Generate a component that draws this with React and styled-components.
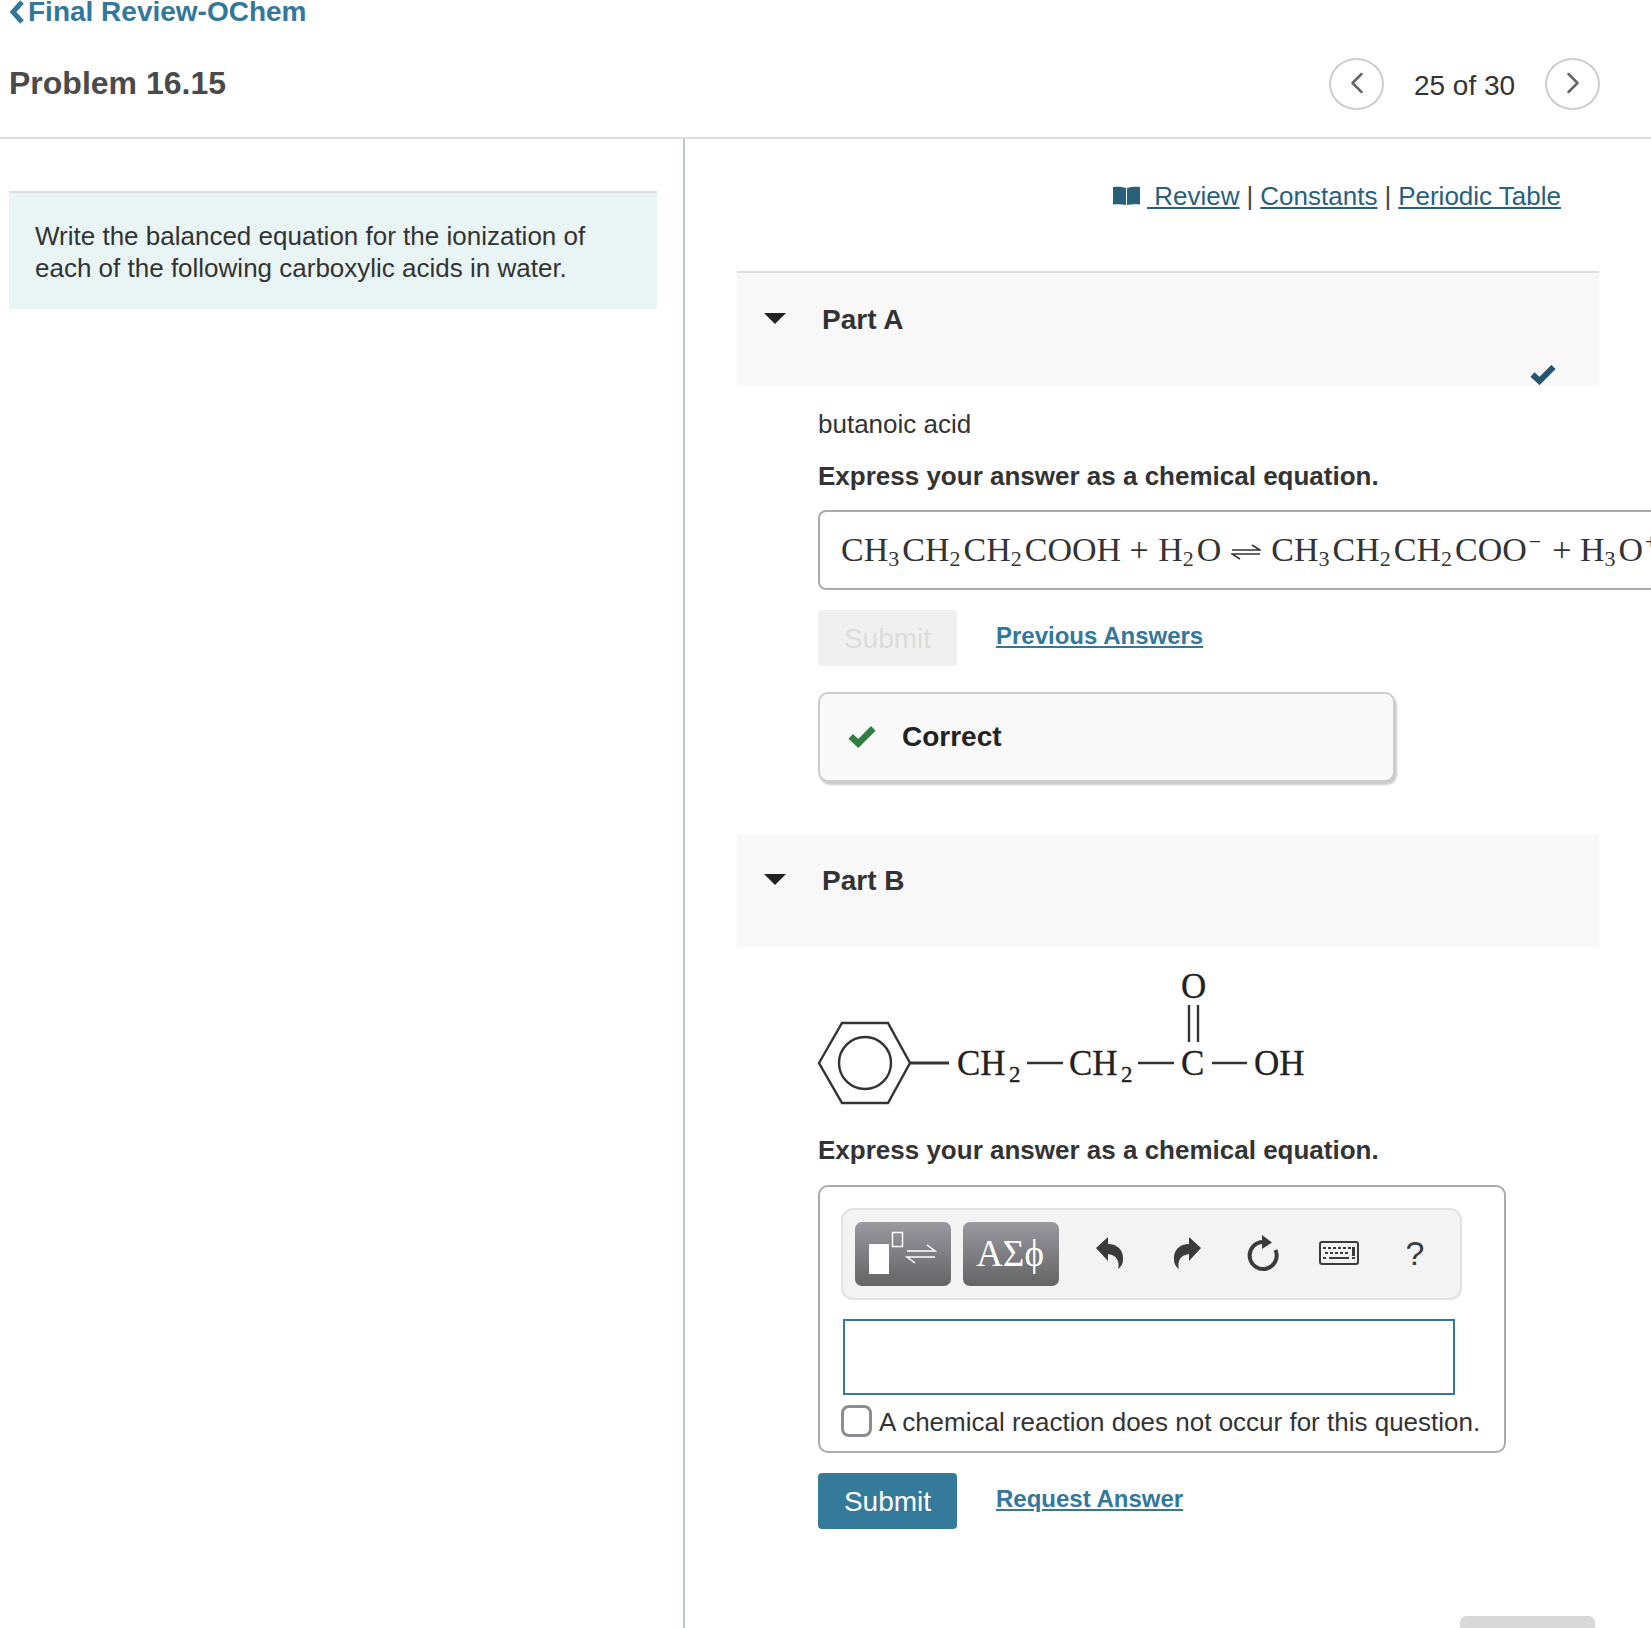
import React from 'react';
import styled, {createGlobalStyle} from 'styled-components';
import {ChevronLeft, ChevronRight} from 'lucide-react';

const GlobalStyle = createGlobalStyle`
    html, body {
        margin: 0;
        padding: 0;
        background: #fff;
    }
    body {
        font-family: 'Liberation Sans', Arial, sans-serif;
        color: #333;
    }
`;

const Page = styled.div`
    width: 1651px;
    height: 1628px;
    overflow: hidden;
`;

const TopBar = styled.header`
    height: 137px;
    padding-left: 9px;
    padding-right: 51px;
    border-bottom: 2px solid #ddd;
`;

const BackLink = styled.a`
    display: flex;
    align-items: center;
    gap: 4px;
    height: 24px;
    color: #33789a;
    font-size: 28px;
    font-weight: bold;
    line-height: 24px;
`;

const TitleRow = styled.div`
    display: flex;
    justify-content: space-between;
    align-items: center;
    margin-top: 34px;
`;

const Title = styled.h1`
    margin: 0;
    padding-bottom: 2px;
    font-size: 32px;
    font-weight: bold;
    color: #4a4a4a;
`;

const Pager = styled.div`
    display: flex;
    align-items: center;
    font-size: 28px;
    color: #333;
`;

const PagerText = styled.span`
    width: 161px;
    padding-top: 3px;
    text-align: center;
`;

const RoundButton = styled.button`
    display: flex;
    align-items: center;
    justify-content: center;
    width: 55px;
    height: 52px;
    padding: 0 0 2px;
    background: #fff;
    border: 2px solid #ccc;
    border-radius: 50%;
    color: #666;
`;

const Columns = styled.div`
    display: grid;
    grid-template-columns: 683px 1fr;
`;

const LeftColumn = styled.aside`
    padding: 52px 26px 0 9px;
    height: 1489px;
    box-sizing: border-box;
    border-right: 2px solid #b9c7d6;
    width: 685px;
`;

const IntroBox = styled.div`
    height: 116px;
    box-sizing: content-box;
    padding: 0 26px;
    background: #e9f5f5;
    border-top: 2px solid #ddd;
    font-size: 26px;
    line-height: 32px;
    color: #333;
`;

const IntroText = styled.p`
    margin: 0;
    padding-top: 27px;
`;

const RightColumn = styled.main`
    padding: 41px 52px 0 54px;
    min-width: 0;
`;

const LinksRow = styled.div`
    display: flex;
    justify-content: flex-end;
    align-items: center;
    gap: 7px;
    height: 32px;
    margin-right: 38px;
    font-size: 26px;
    color: #444;
`;

const RefLink = styled.a`
    color: #2a5f7a;
    text-decoration: underline;
    white-space: pre;
`;

const BookIcon = styled.svg`
    width: 27px;
    height: 20px;
`;

const PartHeader = styled.section`
    position: relative;
    display: flex;
    align-items: flex-start;
    box-sizing: border-box;
    height: ${p => p.$height}px;
    margin-top: ${p => p.$top}px;
    padding: ${p => p.$pad}px 0 0 27px;
    background: #f8f8f8;
    border-top: ${p => (p.$line ? '2px solid #ddd' : 'none')};
`;

const Triangle = styled.span`
    width: 0;
    height: 0;
    margin-top: 9px;
    border-left: 11px solid transparent;
    border-right: 11px solid transparent;
    border-top: 11px solid #222;
`;

const PartTitle = styled.h2`
    margin: 0 0 0 36px;
    font-size: 28px;
    line-height: 32px;
    font-weight: bold;
    color: #333;
`;

const DoneMark = styled.span`
    position: absolute;
    right: 43px;
    bottom: 1px;
    display: flex;
`;

const PartBody = styled.div`
    margin-left: 81px;
`;

const Prompt = styled.p`
    margin: ${p => p.$top}px 0 0;
    font-size: 26px;
    line-height: 32px;
    font-weight: ${p => (p.$bold ? 'bold' : 'normal')};
    color: #333;
`;

const AnswerBox = styled.div`
    display: flex;
    align-items: center;
    box-sizing: border-box;
    width: 900px;
    height: 80px;
    margin-top: 18px;
    padding-left: 21px;
    background: #fff;
    border: 2px solid #aaa;
    border-radius: 8px;
    font-family: 'Liberation Serif', 'Times New Roman', serif;
    font-size: 34px;
    color: #333;
    white-space: nowrap;
`;

const Chem = styled.span`
    margin-right: ${p => p.$gap || 0}px;
    sub {
        margin-right: 3px;
        font-size: 22px;
        line-height: 0;
        vertical-align: -5px;
    }
    sup {
        margin: 0 11px 0 2px;
        font-size: 22px;
        line-height: 0;
        vertical-align: 12px;
    }
`;

const ActionRow = styled.div`
    display: flex;
    align-items: flex-start;
    gap: 39px;
    margin-top: 20px;
`;

const SubmitButton = styled.button`
    width: 139px;
    height: 56px;
    padding: 2px 0 0;
    border: none;
    border-radius: 4px;
    font-family: inherit;
    font-size: 28px;
    background: ${p => (p.disabled ? '#f0f0f0' : '#357a9b')};
    color: ${p => (p.disabled ? '#dcdcdc' : '#fff')};
`;

const BoldLink = styled.a`
    margin-top: 10px;
    font-size: 24px;
    line-height: 32px;
    font-weight: bold;
    color: #33789a;
    text-decoration: underline;
`;

const Feedback = styled.div`
    display: flex;
    align-items: center;
    gap: 26px;
    box-sizing: border-box;
    width: 577px;
    height: 90px;
    margin-top: 26px;
    padding-left: 28px;
    background: #f9f9f9;
    border: 2px solid #ccc;
    border-radius: 10px;
    box-shadow: 2px 3px 2px #ccc;
    font-size: 28px;
    font-weight: bold;
    color: #222;
`;

const Structure = styled.svg`
    display: block;
    margin: 13px 0 0 -8px;
`;

const StructureText = styled.text`
    font-family: 'Liberation Serif', 'Times New Roman', serif;
    font-size: ${p => p.$size}px;
    fill: #222;
    stroke: #222;
    stroke-width: 0.3px;
`;

const Editor = styled.div`
    box-sizing: border-box;
    width: 688px;
    height: 268px;
    margin-top: 19px;
    padding: 21px 21px 0;
    border: 2px solid #aaa;
    border-radius: 10px;
`;

const Toolbar = styled.div`
    display: flex;
    align-items: center;
    box-sizing: border-box;
    width: 621px;
    height: 92px;
    padding-left: 12px;
    background: #f3f3f3;
    border: 2px solid #e2e2e2;
    border-radius: 12px;
`;

const TemplateButton = styled.button`
    display: flex;
    align-items: center;
    justify-content: center;
    width: 96px;
    height: 64px;
    margin-right: 12px;
    padding: 0 2px 2px 0;
    border: none;
    border-radius: 7px;
    background: linear-gradient(#9a98a0, #646464);
    color: #fff;
    font-family: 'Liberation Serif', 'Times New Roman', serif;
    font-size: 37px;
    white-space: nowrap;
`;

const ToolSlot = styled.span`
    display: flex;
    align-items: center;
    justify-content: center;
    width: ${p => (p.$wide ? 78 : 76)}px;
    padding-bottom: 2px;
    color: #3b3b3b;
    font-size: 34px;
`;

const InputField = styled.div`
    box-sizing: border-box;
    width: 612px;
    height: 76px;
    margin: 19px 0 0 2px;
    border: 2px solid #33789a;
`;

const CheckRow = styled.label`
    display: flex;
    align-items: center;
    gap: 7px;
    margin-top: 11px;
    font-size: 26px;
    line-height: 32px;
    color: #333;
    white-space: nowrap;
`;

const CheckBox = styled.span`
    box-sizing: border-box;
    width: 31px;
    height: 32px;
    margin-top: -2px;
    background: #fff;
    border: 3px solid #8c8c92;
    border-radius: 8px;
`;

const BottomRow = styled.div`
    display: flex;
    justify-content: flex-end;
    margin: 87px 4px 0 0;
`;

const GrayTab = styled.div`
    width: 135px;
    height: 12px;
    background: #d8d8d8;
    border-radius: 6px 6px 0 0;
`;

function BackChevron() {
    return (
        <svg width="15" height="24" viewBox="0 0 15 24" fill="none" stroke="#33789a" strokeWidth="5">
            <path d="M13 2 L4 12 L13 22"/>
        </svg>
    );
}

function HeavyCheck({color, width, height}) {
    return (
        <svg width={width} height={height} viewBox="0 0 26 20" fill="none" stroke={color} strokeWidth="6">
            <path d="M2.5 9.5 L9.5 16 L23.5 2"/>
        </svg>
    );
}

function EquilibriumArrow({width, height, style}) {
    return (
        <svg width={width} height={height} viewBox="0 0 30 16" fill="none" stroke="currentColor" strokeWidth="1.5" style={style}>
            <path d="M1 6 H29 L21 1"/>
            <path d="M29 10 H1 L9 15"/>
        </svg>
    );
}

function UndoIcon({flip}) {
    return (
        <svg width="30" height="34" viewBox="0 0 30 34" fill="#3b3b3b" style={flip ? {transform: 'scaleX(-1)'} : undefined}>
            <path d="M1 12 L13 1 V8 C22 8 29 14 28 24 C28 28 26 31 23 33 C25 26 22 19 13 18 V25 Z"/>
        </svg>
    );
}

function ReloadIcon() {
    return (
        <svg width="34" height="38" viewBox="0 0 34 38" fill="none">
            <path d="M17 8 A13.5 13.5 0 1 0 29.5 16" stroke="#3b3b3b" strokeWidth="4"/>
            <path d="M16 1 L26 8.5 L16 15 Z" fill="#3b3b3b"/>
        </svg>
    );
}

function KeyboardIcon() {
    const keys = [];
    [9, 14, 19, 24, 29].forEach(x => keys.push(<rect key={'a' + x} x={x} y="6" width="3" height="2"/>));
    [6, 11, 16, 21, 26].forEach(x => keys.push(<rect key={'b' + x} x={x} y="11" width="3" height="2"/>));
    return (
        <svg width="40" height="24" viewBox="0 0 40 24" fill="#3b3b3b">
            <rect x="1" y="1" width="38" height="22" rx="2" fill="none" stroke="#3b3b3b" strokeWidth="2"/>
            <rect x="4" y="6" width="3" height="2"/>
            <rect x="33" y="6" width="3" height="9"/>
            <rect x="4" y="16" width="3" height="2"/>
            <rect x="10" y="16" width="20" height="2"/>
            <rect x="33" y="16" width="3" height="2"/>
            {keys}
        </svg>
    );
}

function CarboxylicStructure() {
    return (
        <Structure width="510" height="160" viewBox="810 960 510 160">
            <g fill="none" stroke="#333">
                <path d="M819 1063 L842 1023 H888 L910 1063 L888 1103 H842 Z" strokeWidth="2.4"/>
                <circle cx="865" cy="1063" r="26" strokeWidth="2.4"/>
                <path d="M910 1063 H949" strokeWidth="3"/>
                <path d="M1027 1063 H1063 M1138 1063 H1174 M1212 1063 H1247" strokeWidth="2.4"/>
                <path d="M1189 1005 V1042 M1198 1005 V1042" strokeWidth="2.4"/>
            </g>
            <StructureText $size={35} x="957" y="1075">CH</StructureText>
            <StructureText $size={23} x="1009" y="1082">2</StructureText>
            <StructureText $size={35} x="1069" y="1075">CH</StructureText>
            <StructureText $size={23} x="1121" y="1082">2</StructureText>
            <StructureText $size={35} x="1181" y="1075">C</StructureText>
            <StructureText $size={35} x="1254" y="1075">OH</StructureText>
            <StructureText $size={35} x="1181" y="998">O</StructureText>
        </Structure>
    );
}

function App() {
    return (
        <Page>
            <GlobalStyle />
            <TopBar>
                <BackLink><BackChevron />Final Review-OChem</BackLink>
                <TitleRow>
                    <Title>Problem 16.15</Title>
                    <Pager>
                        <RoundButton><ChevronLeft size={36} strokeWidth={1.7} /></RoundButton>
                        <PagerText>25 of 30</PagerText>
                        <RoundButton><ChevronRight size={36} strokeWidth={1.7} /></RoundButton>
                    </Pager>
                </TitleRow>
            </TopBar>
            <Columns>
                <LeftColumn>
                    <IntroBox>
                        <IntroText>Write the balanced equation for the ionization of<br />each of the following carboxylic acids in water.</IntroText>
                    </IntroBox>
                </LeftColumn>
                <RightColumn>
                    <LinksRow>
                        <BookIcon viewBox="0 0 27 20" fill="#2a5f7a">
                            <path d="M0 1 C4 0.5 9 0.5 13 2 V19 C9 18 4 18 0 18.5 Z"/>
                            <path d="M27 1 C23 0.5 18 0.5 14 2 V19 C18 18 23 18 27 18.5 Z"/>
                        </BookIcon>
                        <RefLink> Review</RefLink>|<RefLink>Constants</RefLink>|<RefLink>Periodic Table</RefLink>
                    </LinksRow>

                    <PartHeader $height={115} $top={59} $pad={31} $line>
                        <Triangle />
                        <PartTitle>Part A</PartTitle>
                        <DoneMark><HeavyCheck color="#24566f" width={26} height={20} /></DoneMark>
                    </PartHeader>
                    <PartBody>
                        <Prompt $top={22}>butanoic acid</Prompt>
                        <Prompt $top={20} $bold>Express your answer as a chemical equation.</Prompt>
                        <AnswerBox>
                            <Chem>CH<sub>3</sub>CH<sub>2</sub>CH<sub>2</sub>COOH</Chem>
                            <Chem $gap={1}>&nbsp;+&nbsp;</Chem>
                            <Chem>H<sub>2</sub>O</Chem>
                            <EquilibriumArrow width={30} height={16} style={{margin: '4px 10px 0 10px'}} />
                            <Chem>CH<sub>3</sub>CH<sub>2</sub>CH<sub>2</sub>COO<sup>−</sup></Chem>
                            <Chem>+&nbsp;</Chem>
                            <Chem>H<sub>3</sub>O<sup>+</sup></Chem>
                        </AnswerBox>
                        <ActionRow>
                            <SubmitButton disabled>Submit</SubmitButton>
                            <BoldLink>Previous Answers</BoldLink>
                        </ActionRow>
                        <Feedback>
                            <HeavyCheck color="#2f8040" width={28} height={22} />
                            Correct
                        </Feedback>
                    </PartBody>

                    <PartHeader $height={113} $top={52} $pad={31}>
                        <Triangle />
                        <PartTitle>Part B</PartTitle>
                    </PartHeader>
                    <PartBody>
                        <CarboxylicStructure />
                        <Prompt $top={14} $bold>Express your answer as a chemical equation.</Prompt>
                        <Editor>
                            <Toolbar>
                                <TemplateButton>
                                    <svg width="70" height="48" viewBox="0 0 70 48" fill="none">
                                        <rect x="2" y="15" width="20" height="30" fill="#fff"/>
                                        <rect x="25.5" y="3.5" width="10" height="14" stroke="#fff" strokeWidth="1.5"/>
                                        <g stroke="#fff" strokeWidth="1.5">
                                            <path d="M40 22 H68 L60 16"/>
                                            <path d="M68 28 H40 L48 34"/>
                                        </g>
                                    </svg>
                                </TemplateButton>
                                <TemplateButton>ΑΣϕ</TemplateButton>
                                <ToolSlot $wide><UndoIcon /></ToolSlot>
                                <ToolSlot><UndoIcon flip /></ToolSlot>
                                <ToolSlot><ReloadIcon /></ToolSlot>
                                <ToolSlot><KeyboardIcon /></ToolSlot>
                                <ToolSlot>?</ToolSlot>
                            </Toolbar>
                            <InputField />
                            <CheckRow>
                                <CheckBox />
                                A chemical reaction does not occur for this question.
                            </CheckRow>
                        </Editor>
                        <ActionRow>
                            <SubmitButton>Submit</SubmitButton>
                            <BoldLink>Request Answer</BoldLink>
                        </ActionRow>
                    </PartBody>
                    <BottomRow>
                        <GrayTab />
                    </BottomRow>
                </RightColumn>
            </Columns>
        </Page>
    );
}

export default App;
